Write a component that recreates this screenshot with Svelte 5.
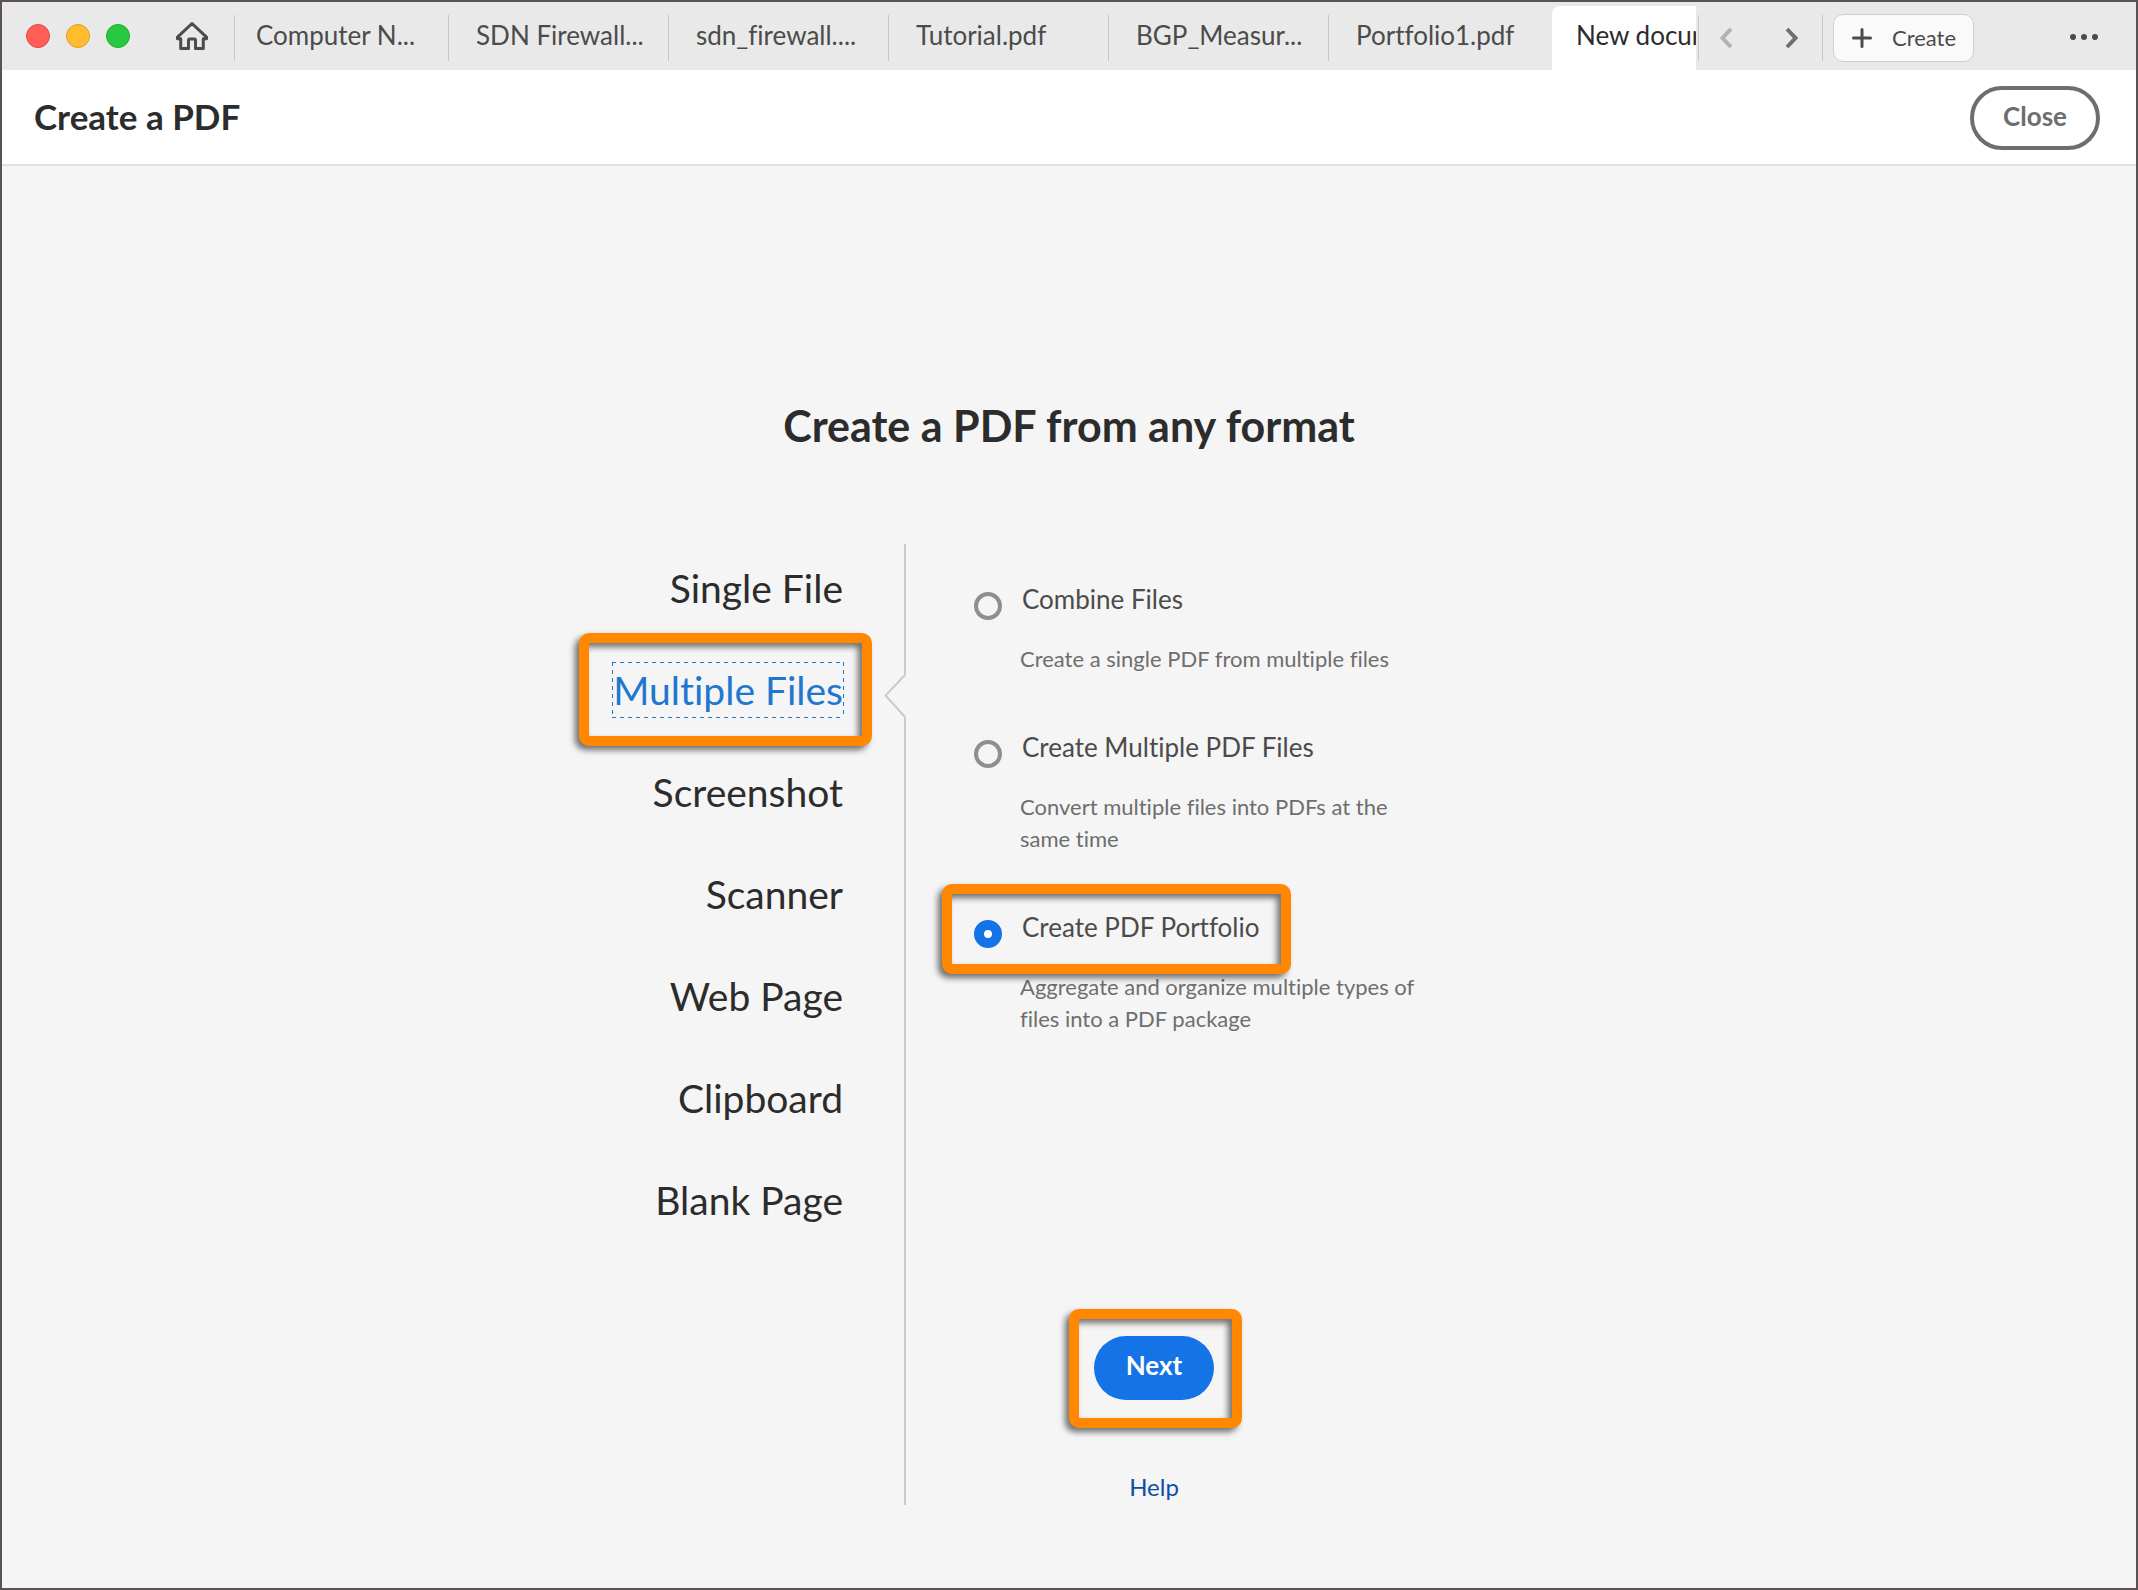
<script lang="ts">
	const tabs = [
		'Computer N...',
		'SDN Firewall...',
		'sdn_firewall....',
		'Tutorial.pdf',
		'BGP_Measur...',
		'Portfolio1.pdf',
		'New document',
	];
	const sources = ['Single File', 'Multiple Files', 'Screenshot', 'Scanner', 'Web Page', 'Clipboard', 'Blank Page'];
	const options = [
		{ id: 'combine', label: 'Combine Files', hint: 'Create a single PDF from multiple files' },
		{ id: 'multiple', label: 'Create Multiple PDF Files', hint: 'Convert multiple files into PDFs at the same time' },
		{ id: 'portfolio', label: 'Create PDF Portfolio', hint: 'Aggregate and organize multiple types of files into a PDF package' },
	];

	let activeTab = $state('New document');
	let source = $state('Multiple Files');
	let choice = $state('portfolio');
</script>

<div class="window">
	<div class="titlebar">
		<div class="lights">
			<button class="light red" aria-label="Close window"></button>
			<button class="light yellow" aria-label="Minimize window"></button>
			<button class="light green" aria-label="Zoom window"></button>
		</div>
		<button class="icon home" aria-label="Home">
			<svg width="34" height="30" viewBox="0 0 34 30" fill="none" stroke="#4b4b4b" stroke-width="3" stroke-linejoin="round">
				<path d="M17 2.5 2.5 16.2v1.6h3.2v9.7h7.8v-8.3q0-1.2 1.2-1.2h4.6q1.2 0 1.2 1.2v8.3h7.8v-9.7h3.2v-1.6z" />
			</svg>
		</button>
		<nav class="tabs" aria-label="Open documents">
			{#each tabs as tab (tab)}
				<button class="tab" class:active={tab === activeTab} onclick={() => (activeTab = tab)}>{tab}</button>
			{/each}
		</nav>
		<div class="scrollers">
			<button class="icon" aria-label="Previous tab" disabled>
				<svg width="14" height="22" viewBox="0 0 14 22" fill="none" stroke="#b1b1b1" stroke-width="4">
					<path d="M12 2 3.5 11l8.5 9" />
				</svg>
			</button>
			<button class="icon" aria-label="Next tab">
				<svg width="14" height="22" viewBox="0 0 14 22" fill="none" stroke="#6e6e6e" stroke-width="4">
					<path d="m2 2 8.5 9L2 20" />
				</svg>
			</button>
		</div>
		<button class="create">
			<svg width="20" height="20" viewBox="0 0 20 20" stroke="#4b4b4b" stroke-width="3" stroke-linecap="round">
				<path d="M10 1.5v17M1.5 10h17" />
			</svg>
			Create
		</button>
		<button class="icon more" aria-label="More">
			<svg width="28" height="6" viewBox="0 0 28 6" fill="#4b4b4b">
				<circle cx="3" cy="3" r="3" />
				<circle cx="14" cy="3" r="3" />
				<circle cx="25" cy="3" r="3" />
			</svg>
		</button>
	</div>

	<header>
		<h1>Create a PDF</h1>
		<button class="close">Close</button>
	</header>

	<main>
		<h2>Create a PDF from any format</h2>
		<div class="wizard">
			<div class="sources">
				{#each sources as s (s)}
					<button class="source" class:selected={s === source} onclick={() => (source = s)}>
						{s}
						{#if s === source}
							<span class="callout"></span>
						{/if}
					</button>
				{/each}
			</div>
			<div class="divider">
				<svg width="22" height="42" viewBox="0 0 22 42" fill="none" stroke="#cacaca" stroke-width="2">
					<path d="M21 0 1.500 20.500 21 42" />
				</svg>
			</div>
			<div class="panel">
				{#each options as o (o.id)}
					<div class="option">
						<div class="pick">
							<input type="radio" id={o.id} name="mode" value={o.id} bind:group={choice} aria-describedby="{o.id}-hint" />
							<label for={o.id}>{o.label}</label>
							{#if o.id === choice}
								<span class="callout"></span>
							{/if}
						</div>
						<p id="{o.id}-hint">{o.hint}</p>
					</div>
				{/each}
				<div class="actions">
					<button class="next">Next<span class="callout"></span></button>
					<a href="#help">Help</a>
				</div>
			</div>
		</div>
	</main>
</div>

<style>
	:global(body) {
		background: #f5f5f5;
	}
	.window {
		box-sizing: border-box;
		min-height: 100vh;
		border: 2px solid #5a5254;
		background: #f5f5f5;
		color: #2c2c2c;
		font-family: Lato, 'Open Sans', sans-serif;
		font-variant-ligatures: none;
	}
	button {
		padding: 0;
		border: 0;
		background: none;
		color: inherit;
		font: inherit;
		font-variant-ligatures: none;
		cursor: pointer;
	}
	svg {
		display: block;
	}

	.titlebar {
		display: flex;
		align-items: center;
		height: 68px;
		background: #e9e9e9;
	}
	.lights {
		display: flex;
		gap: 16px;
		margin-left: 24px;
	}
	.light {
		width: 24px;
		height: 24px;
		border: 1px solid;
		border-radius: 50%;
	}
	.red {
		border-color: #e5463f;
		background: #ff5f57;
	}
	.yellow {
		border-color: #e0a028;
		background: #febc2e;
	}
	.green {
		border-color: #1dad2b;
		background: #28c840;
	}
	.home {
		margin: 0 25px 0 45px;
	}
	.tabs {
		display: flex;
		flex: 0 1 1462px;
		align-self: stretch;
		overflow: hidden;
	}
	.tab {
		position: relative;
		flex: none;
		width: 220px;
		padding: 0 0 2px 28px;
		color: #4b4b4b;
		font-size: 26px;
		text-align: left;
		white-space: nowrap;
	}
	.tab:first-child {
		width: 214px;
		padding-left: 22px;
	}
	.tab::before,
	.scrollers::before,
	.scrollers::after {
		content: '';
		position: absolute;
		top: 13px;
		left: 0;
		width: 1px;
		height: 46px;
		background: #c6c6c6;
	}
	.tab.active {
		width: 240px;
		margin: 4px 0 0 4px;
		padding: 0 0 6px 24px;
		border-radius: 8px 8px 0 0;
		background: #fff;
		color: #2c2c2c;
	}
	.tab.active::before {
		display: none;
	}
	.scrollers {
		position: relative;
		display: flex;
		flex: none;
		align-items: center;
		align-self: stretch;
		justify-content: space-between;
		box-sizing: border-box;
		width: 125px;
		margin-left: 2px;
		padding: 4px 24px 0 21px;
	}
	.scrollers::after {
		right: 0;
		left: auto;
	}
	.create {
		display: flex;
		flex: none;
		align-items: center;
		gap: 20px;
		box-sizing: border-box;
		height: 48px;
		margin: 4px 0 0 10px;
		padding: 0 17px 1px 18px;
		border: 1px solid #cfcfcf;
		border-radius: 10px;
		background: #fafafa;
		color: #4b4b4b;
		font-size: 22px;
	}
	.more {
		margin: 2px 38px 0 auto;
	}

	header {
		display: flex;
		align-items: center;
		justify-content: space-between;
		height: 94px;
		padding: 0 36px 0 32px;
		border-bottom: 2px solid #e1e1e1;
		background: #fff;
	}
	h1 {
		margin: 0;
		font-size: 35px;
		line-height: 40px;
		padding-bottom: 2px;
	}
	.close {
		box-sizing: border-box;
		min-width: 130px;
		height: 64px;
		margin-top: 2px;
		padding-bottom: 5px;
		border: 4px solid #6e6e6e;
		border-radius: 32px;
		color: #6e6e6e;
		font-size: 26px;
		font-weight: 700;
	}

	main {
		padding: 234px 32px 83px;
	}
	h2 {
		margin: 0 0 92px;
		font-size: 43px;
		line-height: 52px;
		text-align: center;
	}
	.wizard {
		display: grid;
		grid-template-columns: 335px 2px 1fr;
		max-width: 1000px;
		margin: 0 auto;
	}
	.sources {
		display: flex;
		flex-direction: column;
		align-items: flex-end;
		gap: 46px;
		padding: 16px 61px 0 0;
	}
	.source {
		position: relative;
		font-size: 39px;
		line-height: 56px;
		white-space: nowrap;
	}
	.source.selected {
		color: #1f77d0;
	}
	.source.selected::before {
		content: '';
		position: absolute;
		inset: 0 -1px;
		background:
			repeating-linear-gradient(90deg, #1f77d0 0 4px, transparent 4px 8px) top / 100% 1px,
			repeating-linear-gradient(90deg, #1f77d0 0 4px, transparent 4px 8px) bottom / 100% 1px,
			repeating-linear-gradient(#1f77d0 0 4px, transparent 4px 8px) left / 1px 100%,
			repeating-linear-gradient(#1f77d0 0 4px, transparent 4px 8px) right / 1px 100%;
		background-repeat: no-repeat;
	}
	.divider {
		position: relative;
		background: #cacaca;
	}
	.divider svg {
		position: absolute;
		top: 131px;
		right: 0;
		background: #f5f5f5;
	}

	.panel {
		display: flex;
		flex-direction: column;
		padding: 39px 0 2px 68px;
	}
	.option {
		margin-bottom: 56px;
	}
	.pick {
		position: relative;
		display: flex;
		align-items: flex-start;
		gap: 20px;
		width: fit-content;
		color: #4b4b4b;
		font-size: 26px;
		line-height: 32px;
	}
	input {
		appearance: none;
		box-sizing: border-box;
		width: 28px;
		height: 28px;
		margin: 9px 0 0;
		border: 4px solid #8f8f8f;
		border-radius: 50%;
	}
	input:checked {
		border: 10px solid #1473e6;
		background: #fff;
	}
	.option p {
		max-width: 410px;
		margin: 23px 0 0 46px;
		color: #6e6e6e;
		font-size: 22px;
		line-height: 32px;
	}
	.actions {
		display: flex;
		flex-direction: column;
		align-items: center;
		gap: 71px;
		width: 360px;
		margin-top: 245px;
	}
	.next {
		position: relative;
		width: 120px;
		height: 64px;
		padding-bottom: 6px;
		border-radius: 32px;
		background: #1473e6;
		color: #fff;
		font-size: 26px;
		font-weight: 700;
	}
	.actions a {
		color: #0d50a3;
		font-size: 24px;
		line-height: 32px;
		text-decoration: none;
	}

	/* Orange marker frame with a shadow falling down and to the left */
	.callout {
		position: absolute;
		border: 10px solid #ff8800;
		border-radius: 10px;
		filter: drop-shadow(-4px 4px 3px rgb(0 0 0 / 55%));
		pointer-events: none;
	}
	.source .callout {
		inset: -29px -29px -28px -34px;
	}
	.pick .callout {
		inset: -27px -32px -26px -32px;
	}
	.next .callout {
		inset: -27px -28px -28px -25px;
	}
</style>
